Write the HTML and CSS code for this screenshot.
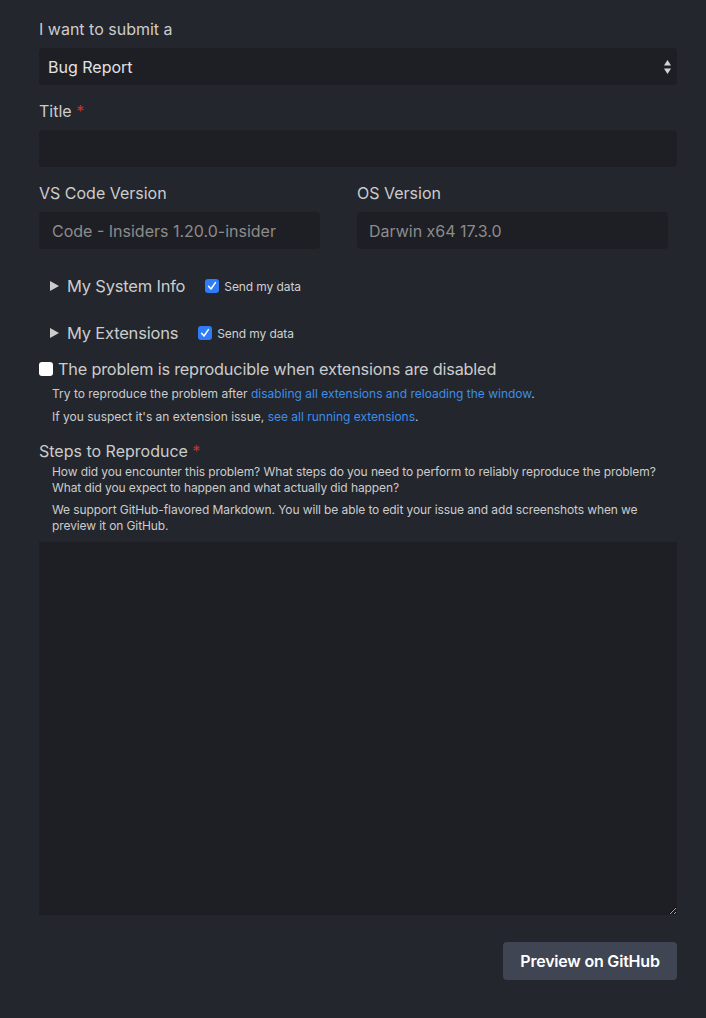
FILE: index.html
```html
<!DOCTYPE html>
<html lang="en">
<head>
  <meta charset="UTF-8">
  <meta name="viewport" content="width=device-width, initial-scale=1.0">
  <title>Issue Reporter</title>
  <link rel="stylesheet" href="styles.css">
</head>
<body>
  <main class="reporter">
    <div class="block">
      <label class="block__label" for="issueType">I want to submit a</label>
      <div class="select">
        <select id="issueType" class="select__control">
          <option>Bug Report</option>
          <option>Performance Issue</option>
          <option>Feature Request</option>
        </select>
        <svg class="select__arrows" width="7" height="16" viewBox="0 0 7 16">
          <path d="M3.5 1 L7 6.5 H0 Z" fill="#d4d4d4"/>
          <path d="M3.5 15 L7 9.5 H0 Z" fill="#d4d4d4"/>
        </svg>
      </div>
    </div>

    <div class="block">
      <label class="block__label" for="title">Title <span class="required">*</span></label>
      <input type="text" id="title" class="input">
    </div>

    <div class="block block--split">
      <div class="col">
        <label class="block__label" for="vscodeVersion">VS Code Version</label>
        <input type="text" id="vscodeVersion" class="input input--vscode" value="Code - Insiders 1.20.0-insider" disabled>
      </div>
      <div class="col">
        <label class="block__label" for="osVersion">OS Version</label>
        <input type="text" id="osVersion" class="input input--os" value="Darwin x64 17.3.0" disabled>
      </div>
    </div>

    <details class="info">
      <summary class="info__summary">
        <svg class="info__caret" width="9" height="10" viewBox="0 0 9 10"><path d="M0 0 L9 5 L0 10 Z" fill="#cccccc"/></svg>
        <span class="info__title">My System Info</span>
        <span class="send">
          <span class="check check--on"><svg width="14" height="14" viewBox="0 0 14 14"><path d="M3.6 7.2 L6 10 L10.4 3.6" stroke="#fff" stroke-width="1.5" fill="none" stroke-linecap="round" stroke-linejoin="round"/></svg></span>
          Send my data
        </span>
      </summary>
    </details>

    <details class="info">
      <summary class="info__summary">
        <svg class="info__caret" width="9" height="10" viewBox="0 0 9 10"><path d="M0 0 L9 5 L0 10 Z" fill="#cccccc"/></svg>
        <span class="info__title">My Extensions</span>
        <span class="send">
          <span class="check check--on"><svg width="14" height="14" viewBox="0 0 14 14"><path d="M3.6 7.2 L6 10 L10.4 3.6" stroke="#fff" stroke-width="1.5" fill="none" stroke-linecap="round" stroke-linejoin="round"/></svg></span>
          Send my data
        </span>
      </summary>
    </details>

    <div class="repro">
      <div class="repro__row">
        <span class="check check--off"></span>
        <span class="repro__text">The problem is reproducible when extensions are disabled</span>
      </div>
      <p class="hint">Try to reproduce the problem after <a href="#" class="link">disabling all extensions and reloading the window</a>.</p>
      <p class="hint">If you suspect it's an extension issue, <a href="#" class="link">see all running extensions</a>.</p>
    </div>

    <div class="block">
      <label class="block__label" for="description">Steps to Reproduce <span class="required">*</span></label>
      <p class="desc">How did you encounter this problem? What steps do you need to perform to reliably reproduce the problem? What did you expect to happen and what actually did happen?</p>
      <p class="desc desc--last">We support GitHub-flavored Markdown. You will be able to edit your issue and add screenshots when we preview it on GitHub.</p>
      <textarea id="description" class="textarea"></textarea>
    </div>

    <div class="actions">
      <button class="button" type="button">Preview on GitHub</button>
    </div>
  </main>
</body>
</html>
```

FILE: styles.css
```css
*,
*::before,
*::after {
  box-sizing: border-box;
}
body{
  margin: 0;
  padding: 0;
  background-color: #23262d;
  color: #cccccc;
  font-family: Inter, 'Noto Sans', sans-serif;
  font-size: 16px;
}
.reporter{
  padding: 19px 29px 0 39px;
}
.block{
  margin-bottom: 16px;
}
.block__label{
  display: block;
  line-height: 20px;
  margin-bottom: 9px;
}
.required{
  color: #c8312f;
}
.select{
  position: relative;
}
.select__control{
  appearance: none;
  display: block;
  width: 100%;
  height: 37px;
  border: none;
  border-radius: 4px;
  padding: 0 9px;
  background-color: #1e1f24;
  color: #e2e2e2;
  font-family: inherit;
  font-size: 16px;
}
.select__arrows{
  position: absolute;
  right: 6px;
  top: 11px;
  pointer-events: none;
}
.input{
  display: block;
  width: 100%;
  height: 37px;
  border: none;
  border-radius: 4px;
  padding: 0 13px;
  background-color: #1e1f24;
  color: #8c8c8c;
  font-family: inherit;
  font-size: 16px;
}
.input--vscode{
  width: 281px;
}
.input--os{
  width: 311px;
  padding-left: 12px;
}
.block--split{
  display: grid;
  grid-template-columns: 318px 1fr;
  margin-bottom: 27px;
}
.info{
  margin-bottom: 27px;
}
.info__summary{
  list-style: none;
  display: flex;
  align-items: center;
  height: 20px;
  padding-left: 11px;
  cursor: pointer;
}
.info__summary::-webkit-details-marker{
  display: none;
}
.info__caret{
  margin-right: 8px;
}
.info__title{
  font-size: 16.5px;
  letter-spacing: -0.2px;
  margin-right: 20px;
}
.send{
  display: flex;
  align-items: center;
  gap: 5px;
  font-size: 12px;
  color: #d0d0d0;
  letter-spacing: -0.1px;
}
.check{
  display: inline-block;
  width: 14px;
  height: 14px;
  border-radius: 3px;
}
.check--on{
  background-color: #2f7cf6;
}
.check--on svg{
  display: block;
}
.check--off{
  background-color: #ffffff;
}
.repro{
  margin-top: -11px;
  margin-bottom: 16px;
}
.repro__row{
  display: flex;
  align-items: center;
  gap: 5px;
  height: 20px;
  margin-bottom: 7px;
}
.repro__text{
  font-size: 16.3px;
  letter-spacing: -0.2px;
}
.hint{
  margin: 0 0 7px 13px;
  font-size: 12px;
  line-height: 16px;
}
.link{
  color: #3d8ee8;
  text-decoration: none;
}
.desc{
  margin: -6px 0 6px 13px;
  font-size: 12px;
  line-height: 16px;
  letter-spacing: -0.1px;
}
.desc + .desc{
  margin-top: 0;
}
.desc--last{
  margin-bottom: 8px;
}
.textarea{
  display: block;
  width: 100%;
  height: 373px;
  border: none;
  border-radius: 0;
  background-color: #1e1f24;
  color: #cccccc;
  resize: vertical;
}
.actions{
  display: flex;
  justify-content: flex-end;
  margin-top: 27px;
}
.button{
  height: 38px;
  width: 174px;
  border: none;
  border-radius: 4px;
  background-color: #3f4552;
  color: #ffffff;
  font-family: inherit;
  font-size: 16px;
  font-weight: 600;
  letter-spacing: -0.2px;
}
```
